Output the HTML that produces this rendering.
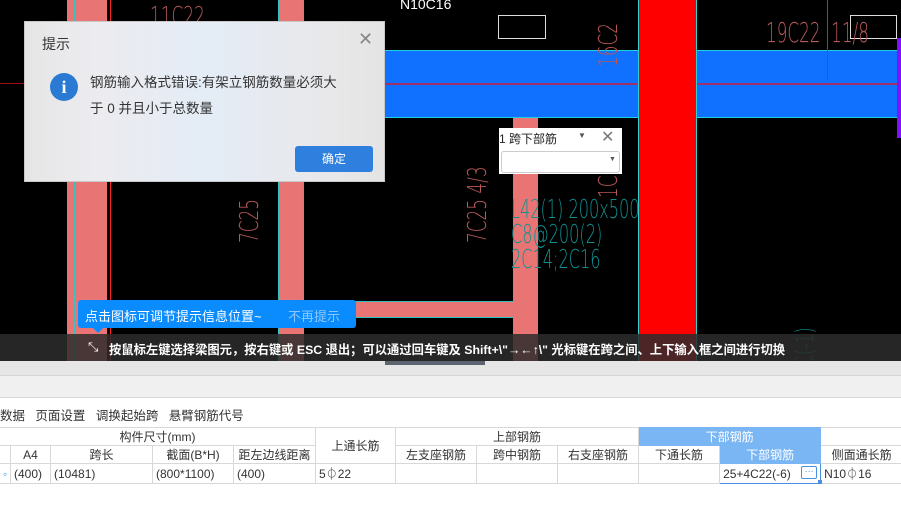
<!DOCTYPE html>
<html><head><meta charset="utf-8"><style>
*{margin:0;padding:0;box-sizing:border-box}
body{width:901px;height:518px;overflow:hidden;background:#fff;font-family:"Liberation Sans","Noto Sans CJK SC",sans-serif;position:relative}
.a{position:absolute}
.cad{font-family:"DejaVu Sans","Liberation Sans",sans-serif;font-weight:200;white-space:nowrap}
td{border:1px solid #d8d8d8;font-size:12px;color:#333;height:18px;padding:0 3px;white-space:nowrap}
</style></head><body>
<div class="a" style="left:0;top:0;width:901px;height:361px;background:#000;overflow:hidden">
  <div class="a" style="left:0;top:83px;width:901px;height:1px;background:#a01010"></div>
  <div class="a" style="left:385px;top:50px;width:512px;height:68px;background:#1070ff;border-top:1px solid #20d0e0;border-bottom:1px solid #20d0e0"></div>
  <div class="a" style="left:385px;top:83px;width:512px;height:2px;background:#a0306a"></div>
  <div class="a" style="left:897px;top:38px;width:4px;height:100px;background:#8010ff"></div>
  <div class="a" style="left:67px;top:0;width:40px;height:361px;background:#e87474"></div>
  <div class="a" style="left:74px;top:0;width:1px;height:361px;background:#40c0c0"></div>
  <div class="a" style="left:110px;top:0;width:1px;height:361px;background:#ff2020"></div>
  <div class="a" style="left:278px;top:0;width:26px;height:361px;background:#e87474;border-left:1px solid #30c0c0;border-right:1px solid #30c0c0"></div>
  <div class="a" style="left:303px;top:301px;width:212px;height:17px;background:#e87474;border-top:1px solid #30c0c0;border-bottom:1px solid #30c0c0"></div>
  <div class="a" style="left:513px;top:118px;width:25px;height:243px;background:#e87474;border-left:1px solid #30c0c0;border-right:1px solid #30c0c0"></div>
  <div class="a" style="left:638px;top:0;width:59px;height:361px;background:#ff0000;border-left:1px solid #30d0d0;border-right:1px solid #30d0d0"></div>
  <div class="a" style="left:498px;top:15px;width:48px;height:24px;border:1px solid #ddd"></div>
  <div class="a" style="left:850px;top:15px;width:47px;height:24px;border:1px solid #ddd"></div>
  <div class="a" style="left:827px;top:0;width:1px;height:80px;background:#207070"></div>
  <div class="a cad" style="left:766px;top:16px;font-size:28px;color:#b85858;transform:scaleX(.6);transform-origin:left">19C22&nbsp;&nbsp;11/8</div>
  <div class="a cad" style="left:150px;top:2px;font-size:26px;color:#b85858;transform:scaleX(.65);transform-origin:left">11C22</div>
  <div class="a" style="left:400px;top:-4px;font-size:14px;color:#fff">N10C16</div>
  <div class="a cad" style="left:511px;top:198px;font-size:26px;line-height:25px;color:#109090;transform:scaleX(.62);transform-origin:left">L42(1)&nbsp;200x500<br>C8@200(2)<br>2C14;2C16</div>
  <div class="a cad" style="left:478px;top:228px;font-size:26px;color:#b85858;transform:rotate(-90deg) scaleX(.65);transform-origin:left">7C25&nbsp;4/3</div>
  <div class="a cad" style="left:250px;top:228px;font-size:26px;color:#b85858;transform:rotate(-90deg) scaleX(.65);transform-origin:left">7C25</div>
  <div class="a cad" style="left:609px;top:183px;font-size:26px;color:#b85858;transform:rotate(-90deg) scaleX(.65);transform-origin:left">1CC20</div>
  <div class="a cad" style="left:609px;top:52px;font-size:26px;color:#b85858;transform:rotate(-90deg) scaleX(.65);transform-origin:left">16C2</div>
  <div class="a cad" style="left:805px;top:362px;font-size:24px;color:#108080;transform:rotate(-90deg) scaleX(.65);transform-origin:left">2C(-1)</div>
  <div class="a" style="left:499px;top:128px;width:123px;height:46px;background:#fff"></div>
  <div class="a" style="left:499px;top:130px;font-size:12px;color:#222">1 跨下部筋</div>
  <div class="a" style="left:578px;top:131px;font-size:8px;color:#555">▼</div>
  <div class="a" style="left:601px;top:127px;font-size:16px;color:#777">✕</div>
  <div class="a" style="left:501px;top:151px;width:119px;height:22px;border:1px solid #ccc;border-radius:3px"></div>
  <div class="a" style="left:609px;top:156px;font-size:7px;color:#555">▼</div>
</div>
<div class="a" style="left:24px;top:21px;width:361px;height:161px;background:linear-gradient(90deg,#e6e6e6 0%,#ecebef 20%,#e4ecf6 50%,#e8e8ea 85%,#e4e4e4 100%);border:1px solid #c8c8c8">
  <div class="a" style="left:17px;top:12px;font-size:14px;color:#333">提示</div>
  <div class="a" style="left:333px;top:7px;font-size:18px;color:#888">✕</div>
  <div class="a" style="left:25px;top:51px;width:28px;height:28px;border-radius:50%;background:#2a7ad4;color:#fff;text-align:center;font-weight:bold;font-size:18px;line-height:28px;font-family:'Liberation Serif',serif">i</div>
  <div class="a" style="left:65px;top:48px;font-size:13.5px;line-height:26px;color:#333;width:290px">钢筋输入格式错误:有架立钢筋数量必须大<br>于 0 并且小于总数量</div>
  <div class="a" style="left:270px;top:124px;width:78px;height:26px;background:#2f80de;border-radius:3px;color:#fff;font-size:12px;text-align:center;line-height:26px">确定</div>
</div>
<div class="a" style="left:78px;top:300px;width:278px;height:28px;background:#0a8cff;border-radius:3px">
  <div class="a" style="left:7px;top:6px;font-size:13px;color:#fff">点击图标可调节提示信息位置~</div>
  <div class="a" style="left:210px;top:6px;font-size:13px;color:#8cc8ff">不再提示</div>
</div>
<div class="a" style="left:92px;top:327px;width:0;height:0;border-left:6px solid transparent;border-right:6px solid transparent;border-top:6px solid #0a8cff"></div>
<div class="a" style="left:0;top:334px;width:901px;height:27px;background:rgba(45,45,45,.85)"></div>
<div class="a" style="left:88px;top:339px;font-size:13px;color:#fff">⤡</div>
<div class="a" style="left:109px;top:340px;font-size:12.3px;color:#fff;font-weight:bold;white-space:nowrap">按鼠标左键选择梁图元，按右键或 ESC 退出；可以通过回车键及 Shift+\"→←↑\" 光标键在跨之间、上下输入框之间进行切换</div>
<div class="a" style="left:0;top:361px;width:901px;height:15px;background:#e6e6e6;border-bottom:1px solid #d6d6d6"></div>
<div class="a" style="left:385px;top:361px;width:100px;height:4px;background:#5c6470"></div>
<div class="a" style="left:0;top:376px;width:901px;height:22px;background:#f0f0f0;border-bottom:1px solid #d8d8d8"></div>
<div class="a" style="left:0;top:405px;font-size:12.5px;color:#333;white-space:nowrap">数据&nbsp;&nbsp;&nbsp;页面设置&nbsp;&nbsp;&nbsp;调换起始跨&nbsp;&nbsp;&nbsp;悬臂钢筋代号</div>
<table class="a" style="left:-1px;top:427px;border-collapse:collapse;table-layout:fixed;width:903px;text-align:center">
<colgroup><col style="width:11px"><col style="width:40px"><col style="width:102px"><col style="width:81px"><col style="width:82px"><col style="width:80px"><col style="width:81px"><col style="width:81px"><col style="width:81px"><col style="width:81px"><col style="width:101px"><col style="width:82px"></colgroup>
<tr style="height:16px"><td colspan="5" style="height:16px">构件尺寸(mm)</td><td rowspan="2">上通长筋</td><td colspan="3">上部钢筋</td><td colspan="2" style="background:#7ab6f4;color:#fff;border-color:#7ab6f4">下部钢筋</td><td></td></tr>
<tr><td></td><td>A4</td><td>跨长</td><td>截面(B*H)</td><td>距左边线距离</td><td>左支座钢筋</td><td>跨中钢筋</td><td>右支座钢筋</td><td>下通长筋</td><td style="background:#7ab6f4;color:#fff;border-color:#7ab6f4">下部钢筋</td><td>侧面通长筋</td></tr>
<tr style="height:20px"><td style="color:#3a8ae0">◦</td><td style="text-align:left">(400)</td><td style="text-align:left">(10481)</td><td style="text-align:left">(800*1100)</td><td style="text-align:left">(400)</td><td style="text-align:left">5⏀22</td><td></td><td></td><td></td><td></td><td style="text-align:left;border:1.5px solid #4a90e2;position:relative">25+4C22(-6)<span style="position:absolute;right:3px;top:2px;width:16px;height:13px;border:1px solid #4a90e2;border-radius:2px;font-size:9px;line-height:9px;color:#4a90e2;text-align:center">···</span></td><td style="text-align:left">N10⏀16</td></tr>
</table>
<div class="a" style="left:818px;top:480px;width:4px;height:4px;background:#4a90e2"></div>
</body></html>
